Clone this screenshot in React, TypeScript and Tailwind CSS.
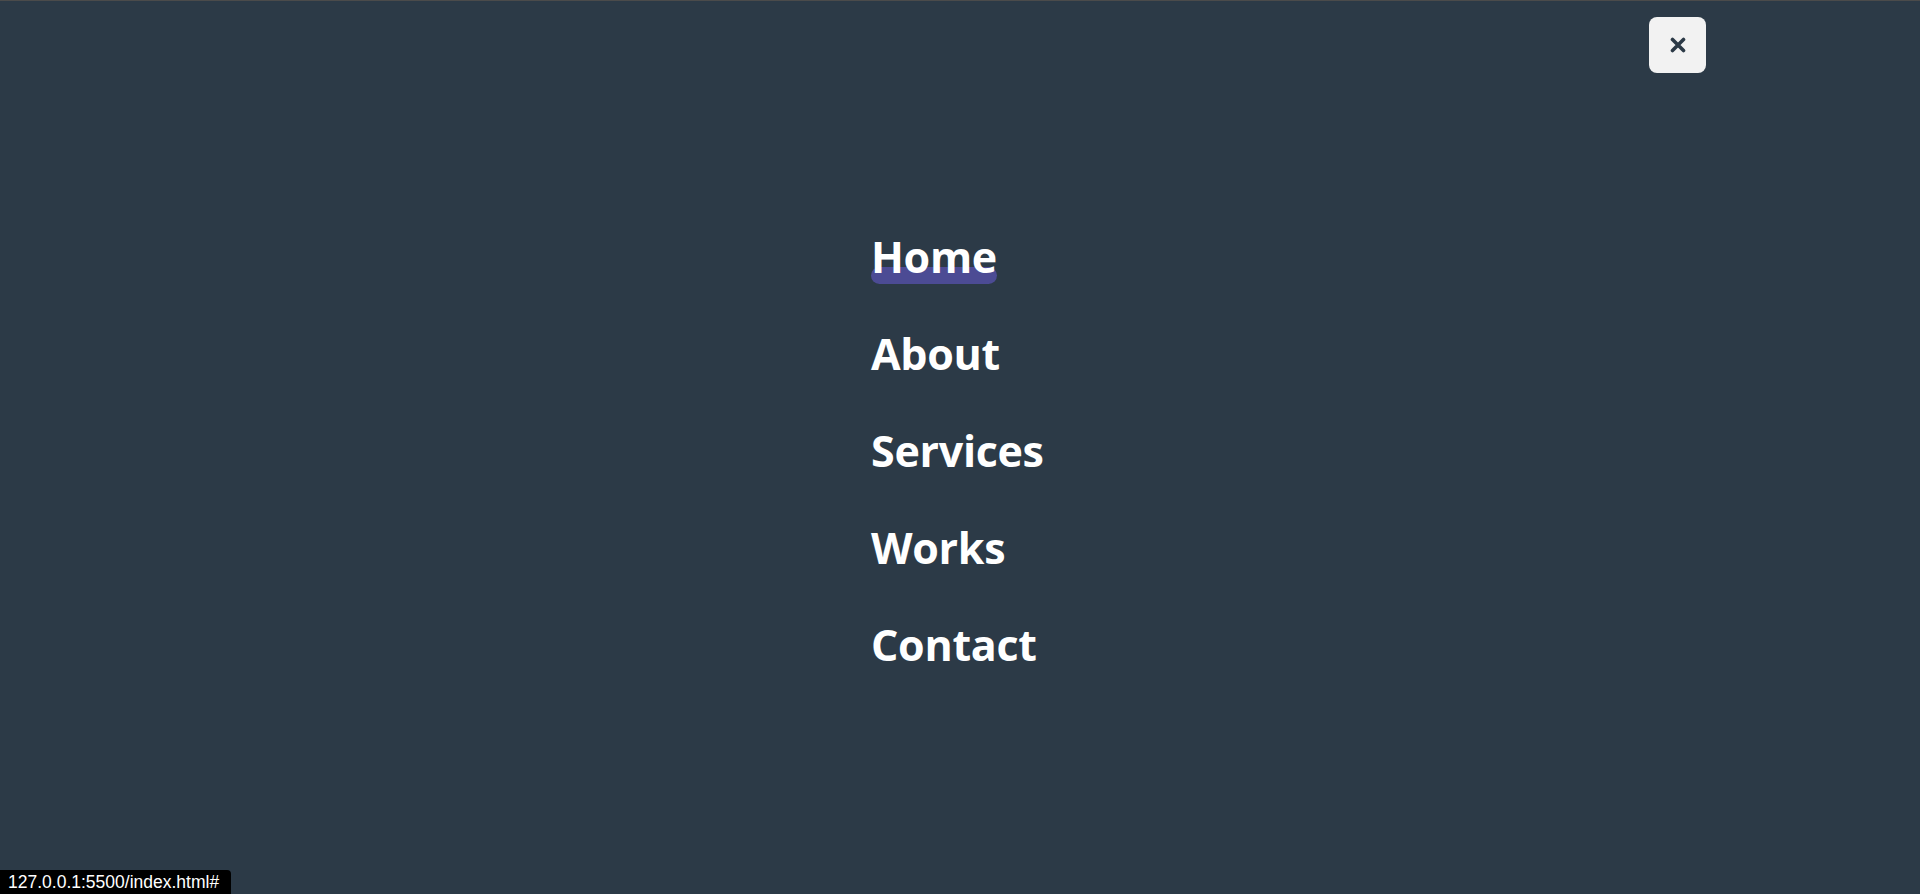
import React from "react";

const links = ["Home", "About", "Services", "Works", "Contact"];

export default function App() {
  return (
    <div className="relative h-[894px] w-full overflow-hidden border-t border-[#4b4b4b] bg-[#2c3a47]">
      <div className="flex justify-end pr-[214px] pt-[16px]">
        <button className="flex h-[56px] w-[57px] items-center justify-center rounded-[8px] bg-[#f2f2f2]">
          <svg width="16" height="16" viewBox="0 0 16 16" fill="none">
            <path d="M2.5 2.5l11 11M13.5 2.5l-11 11" stroke="#2c3a47" strokeWidth="3.6" strokeLinecap="round" />
          </svg>
        </button>
      </div>

      <nav className="absolute inset-0 flex items-center justify-center pt-[5px]">
        <ul className="flex w-[178px] flex-col font-['Open_Sans',sans-serif]">
          {links.map((name, i) => (
            <li key={name} className="h-[97px] leading-[97px]">
              <a href="#" className="relative inline-block text-[43px] font-bold tracking-[-0.3px] text-white">
                {i === 0 && (
                  <span className="absolute bottom-[21px] left-0 right-0 h-[17px] rounded-full bg-[#4c4b94]" />
                )}
                <span className="relative">{name}</span>
              </a>
            </li>
          ))}
        </ul>
      </nav>

      <div className="absolute bottom-0 left-0 rounded-tr-[4px] bg-black pl-[8px] pr-[12px] font-['Liberation_Sans',sans-serif] text-[17.5px] leading-[24px] text-white">
        127.0.0.1:5500/index.html#
      </div>
    </div>
  );
}
